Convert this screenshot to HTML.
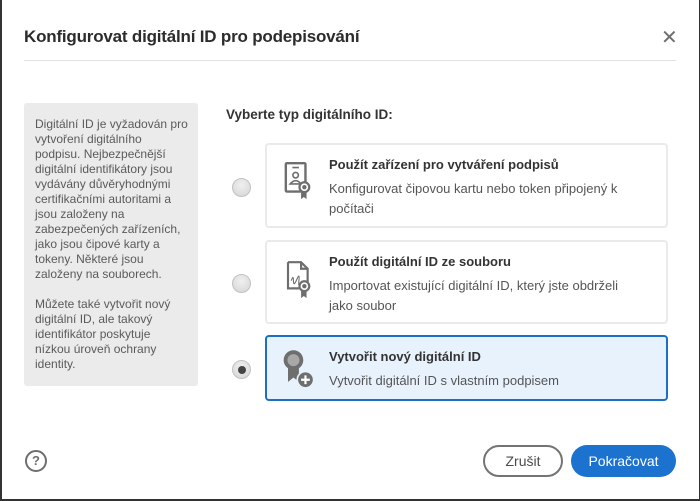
<!DOCTYPE html>
<html><head><meta charset="utf-8"><style>
*{margin:0;padding:0;box-sizing:border-box}
body{width:700px;height:501px;overflow:hidden;background:#fff;font-family:"Liberation Sans",sans-serif;color:#4b4b4b;position:relative}
.frame{position:absolute;left:0;top:0;width:700px;height:501px;border:1px solid #333;border-width:0 1px 2px 2px}
.title{position:absolute;left:24px;top:27px;font-size:17px;font-weight:bold;color:#2c2c2c;letter-spacing:-0.2px}
.close{position:absolute;left:661px;top:25px;font-size:20px;color:#6e6e6e}
.hr{position:absolute;left:24px;top:60px;width:652px;height:1px;background:#e1e1e1}
.side{position:absolute;left:24px;top:103px;width:174px;height:283px;background:#ebebeb;border-radius:3px;padding:14px 0 0 11px;font-size:12px;line-height:15px;color:#5a5a5a;white-space:nowrap}
.side p{margin-bottom:15px}
.lab{position:absolute;left:226px;top:107px;font-size:13.5px;font-weight:bold;color:#333}
.card{position:absolute;left:265px;width:403px;border:2px solid #eaeaea;border-radius:4px;background:#fff}
.card.sel{border-color:#1c6fc7;background:#e8f2fc}
.card h3{position:absolute;left:62px;top:12px;font-size:13px;font-weight:bold;color:#333}
.card .d{position:absolute;left:62px;top:34px;width:340px;font-size:13px;line-height:20px;color:#555}
.card svg{position:absolute;left:14px}
.radio{position:absolute;left:232px;width:19px;height:19px;border-radius:50%;background:radial-gradient(circle at 50% 35%,#f0f0f0,#d4d4d4);border:1px solid #c2c2c2}
.radio.on::after{content:"";position:absolute;left:4.5px;top:4.5px;width:8px;height:8px;border-radius:50%;background:#444}
.help{position:absolute;left:25px;top:450px;width:22px;height:22px;border:2px solid #6e6e6e;border-radius:50%;font-size:13px;font-weight:bold;text-align:center;line-height:18px;color:#6e6e6e}
.btn{position:absolute;top:445px;height:32px;border-radius:16px;font-size:14px;text-align:center;line-height:28px}
</style></head><body>
<div class="frame"></div>
<div class="title">Konfigurovat digitální ID pro podepisování</div>
<div class="close">✕</div>
<div class="hr"></div>
<div class="side"><p>Digitální ID je vyžadován pro<br>vytvoření digitálního<br>podpisu. Nejbezpečnější<br>digitální identifikátory jsou<br>vydávány důvěryhodnými<br>certifikačními autoritami a<br>jsou založeny na<br>zabezpečených zařízeních,<br>jako jsou čipové karty a<br>tokeny. Některé jsou<br>založeny na souborech.</p><p>Můžete také vytvořit nový<br>digitální ID, ale takový<br>identifikátor poskytuje<br>nízkou úroveň ochrany<br>identity.</p></div>
<div class="lab">Vyberte typ digitálního ID:</div>

<div class="radio" style="top:178px"></div>
<div class="card" style="top:143px;height:85px">
<svg style="top:16px" width="38" height="48" viewBox="0 0 34 44"><rect x="4" y="2" width="18" height="26" rx="1" fill="none" stroke="#6e6e6e" stroke-width="2.2"/><line x1="10" y1="6" x2="16" y2="6" stroke="#6e6e6e" stroke-width="1.5"/><circle cx="13" cy="13" r="2.5" fill="none" stroke="#6e6e6e" stroke-width="1.5"/><path d="M8 21q5-6 10 0z" fill="none" stroke="#6e6e6e" stroke-width="1.5"/><path d="M18 26v9l2.5-2 2.5 2v-9z" fill="#6e6e6e"/><circle cx="21" cy="24" r="4.5" fill="#fff" stroke="#6e6e6e" stroke-width="2"/><circle cx="21" cy="24" r="2" fill="#6e6e6e"/></svg>
<h3>Použít zařízení pro vytváření podpisů</h3>
<div class="d">Konfigurovat čipovou kartu nebo token připojený k<br>počítači</div>
</div>

<div class="radio" style="top:274px"></div>
<div class="card" style="top:240px;height:84px">
<svg style="top:18px" width="38" height="48" viewBox="0 0 34 44"><path d="M6 2h12l6 6v16M24 8h-6v-6M6 2v24h10" fill="none" stroke="#6e6e6e" stroke-width="2"/><path d="M9 19q2-6 2 0t3-1 2 1 3 0" fill="none" stroke="#6e6e6e" stroke-width="1"/><path d="M18 27v8l2.5-2 2.5 2v-8z" fill="#6e6e6e"/><circle cx="21" cy="24" r="4.5" fill="#fff" stroke="#6e6e6e" stroke-width="2"/><circle cx="21" cy="24" r="2" fill="#6e6e6e"/></svg>
<h3>Použít digitální ID ze souboru</h3>
<div class="d">Importovat existující digitální ID, který jste obdrželi<br>jako soubor</div>
</div>

<div class="radio on" style="top:360px"></div>
<div class="card sel" style="top:335px;height:66px">
<svg style="top:10px" width="38" height="48" viewBox="0 0 34 44"><path d="M6 16v16l5-4 5 4v-16z" fill="#6e6e6e"/><circle cx="11" cy="12" r="9" fill="#6e6e6e"/><circle cx="11" cy="12" r="5.5" fill="#a8a8a8"/><circle cx="22" cy="30" r="7.5" fill="#6e6e6e" stroke="#e8f2fc" stroke-width="1.5"/><path d="M22 26v8M18 30h8" stroke="#fff" stroke-width="2"/></svg>
<h3>Vytvořit nový digitální ID</h3>
<div class="d">Vytvořit digitální ID s vlastním podpisem</div>
</div>

<div class="help">?</div>
<div class="btn" style="left:483px;width:80px;border:2px solid #747474;color:#4b4b4b">Zrušit</div>
<div class="btn" style="left:571px;width:105px;background:#1c72cf;color:#fff;line-height:32px">Pokračovat</div>
</body></html>
